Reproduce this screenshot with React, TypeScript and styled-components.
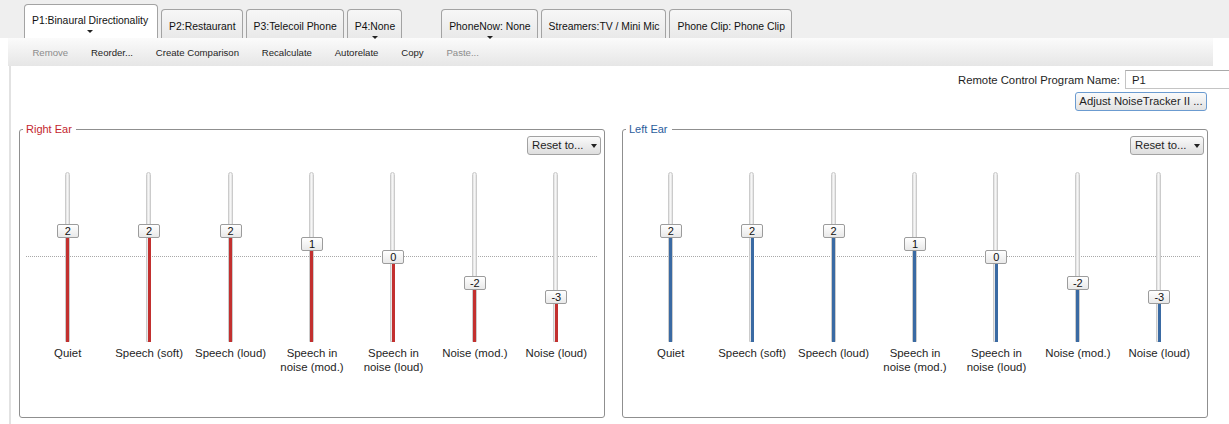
import React from "react";
import styled, { createGlobalStyle } from "styled-components";

const GlobalStyle = createGlobalStyle`
  html, body { margin: 0; padding: 0; background: #ffffff; }
  body { font-family: "Liberation Sans", Arial, sans-serif; color: #1e1e1e; }
`;

const Page = styled.div`
  width: 1229px;
  height: 424px;
  overflow: hidden;
  display: flex;
  flex-direction: column;
  background: #ffffff;
`;

const TabStrip = styled.div`
  height: 38px;
  background: #efefef;
  display: flex;
  align-items: flex-end;
  padding-left: 24px;
  gap: 3px;
`;

const Tab = styled.div<{ $active?: boolean; $gapBefore?: number }>`
  position: relative;
  box-sizing: border-box;
  height: ${(p) => (p.$active ? 34 : 29)}px;
  padding: ${(p) => (p.$active ? "9px 9px 0 7px" : "10px 6px 0 7px")};
  margin-left: ${(p) => p.$gapBefore ?? 0}px;
  border: 1px solid #a3a3a3;
  border-bottom: none;
  border-radius: 4px 4px 0 0;
  background: ${(p) =>
    p.$active ? "#ffffff" : "linear-gradient(#f7f7f7, #e9e9e9)"};
  font-size: 10.4px;
  line-height: 13px;
  color: #111;
  white-space: nowrap;
  display: flex;
  flex-direction: column;
  align-items: center;
`;

const TabArrow = styled.span`
  width: 0;
  height: 0;
  margin-top: 3px;
  border-left: 3px solid transparent;
  border-right: 3px solid transparent;
  border-top: 3px solid #222;
`;

const Toolbar = styled.div`
  height: 28px;
  margin-left: 8px;
  width: 1205px;
  background: linear-gradient(#fbfbfb, #e6e6e6);
  display: flex;
  align-items: center;
  padding-left: 13px;
  box-sizing: border-box;
`;

const ToolItem = styled.span<{ $disabled?: boolean }>`
  padding: 0 11.4px;
  font-size: 9.6px;
  color: ${(p) => (p.$disabled ? "#8c8c8c" : "#1e1e1e")};
  white-space: nowrap;
`;

const Content = styled.div`
  flex: 1;
  margin-left: 9px;
  border-left: 2px solid #e2e2e2;
  display: flex;
  flex-direction: column;
`;

const NameRow = styled.div`
  margin-top: 4px;
  display: flex;
  justify-content: flex-end;
  align-items: center;
  gap: 5px;
  font-size: 11.3px;
`;

const NameInput = styled.div`
  box-sizing: border-box;
  width: 104px;
  height: 19px;
  border: 1px solid #c4c4c4;
  border-right: none;
  border-top-color: #a9a9a9;
  padding: 2px 6px;
  font-size: 11.3px;
  line-height: 14px;
`;

const ButtonRow = styled.div`
  margin-top: 3px;
  display: flex;
  justify-content: flex-end;
  padding-right: 22px;
`;

const AdjustButton = styled.div`
  box-sizing: border-box;
  width: 132px;
  height: 19px;
  border: 1px solid #6b9bd0;
  border-radius: 3px;
  background: linear-gradient(#fafafa, #e2e2e2);
  font-size: 11.3px;
  line-height: 17px;
  text-align: center;
  white-space: nowrap;
`;

const EarsRow = styled.div`
  margin-top: 11px;
  display: flex;
  gap: 17px;
  padding-left: 8px;
`;

const EarSet = styled.fieldset`
  box-sizing: border-box;
  width: 586px;
  height: 296px;
  margin: 0;
  padding: 0 3px 0 0;
  border: 1px solid #8f8f8f;
  border-radius: 3px;
  display: flex;
  flex-direction: column;
`;

const EarLegend = styled.legend<{ $color: string }>`
  margin-left: 3px;
  padding: 0 4px 0 3px;
  font-size: 11px;
  line-height: 14px;
  color: ${(p) => p.$color};
`;

const ResetRow = styled.div`
  display: flex;
  justify-content: flex-end;
`;

const ResetButton = styled.div`
  box-sizing: border-box;
  width: 74px;
  height: 19px;
  border: 1px solid #a2a2a2;
  border-radius: 3px;
  background: linear-gradient(#fafafa, #dedede);
  font-size: 11.3px;
  line-height: 17px;
  padding-left: 4px;
  display: flex;
  align-items: center;
  gap: 7px;
  white-space: nowrap;
`;

const ResetArrow = styled.span`
  width: 0;
  height: 0;
  border-left: 3px solid transparent;
  border-right: 3px solid transparent;
  border-top: 4px solid #222;
`;

const SliderGrid = styled.div`
  position: relative;
  margin-top: 17px;
  padding: 0 4px 0 7px;
  display: grid;
  grid-template-columns: repeat(7, 1fr);

  &::before {
    content: "";
    position: absolute;
    left: 6px;
    right: 4px;
    top: 84px;
    height: 1px;
    background-image: repeating-linear-gradient(
      to right,
      #a8a8a8 0,
      #a8a8a8 1px,
      transparent 1px,
      transparent 2px
    );
  }
`;

const SliderColumn = styled.div`
  display: flex;
  flex-direction: column;
  align-items: center;
`;

const TrackBox = styled.div`
  position: relative;
  width: 22px;
  height: 170px;
`;

const Track = styled.div`
  position: absolute;
  left: 8px;
  top: 0;
  bottom: 0;
  width: 5px;
  border-radius: 3px 3px 0 0;
  box-sizing: border-box;
  border: 1px solid #cbcbcb;
  background: linear-gradient(to right, #e0e0e0, #f6f6f6, #e0e0e0);
`;

const Fill = styled.div<{ $color: string }>`
  position: absolute;
  left: 9.5px;
  bottom: 0;
  width: 3px;
  background: ${(p) => p.$color};
`;

const Handle = styled.div`
  position: absolute;
  left: 0;
  box-sizing: border-box;
  width: 22px;
  height: 14px;
  border: 1px solid #9c9c9c;
  border-radius: 2px;
  background: linear-gradient(#ffffff, #e9e9e9);
  font-size: 11px;
  line-height: 12px;
  text-align: center;
  color: #111;
`;

const SliderLabel = styled.div`
  margin-top: 4px;
  font-size: 11.4px;
  line-height: 14px;
  text-align: center;
  white-space: nowrap;
  color: #1e1e1e;
`;

const CENTER = 85;
const STEP = 13.2;

const bands = [
  { label: ["Quiet"], value: 2 },
  { label: ["Speech (soft)"], value: 2 },
  { label: ["Speech (loud)"], value: 2 },
  { label: ["Speech in", "noise (mod.)"], value: 1 },
  { label: ["Speech in", "noise (loud)"], value: 0 },
  { label: ["Noise (mod.)"], value: -2 },
  { label: ["Noise (loud)"], value: -3 },
];

function Slider({ value, color, label }: { value: number; color: string; label: string[] }) {
  const center = CENTER - value * STEP;
  return (
    <SliderColumn>
      <TrackBox>
        <Track />
        <Fill $color={color} style={{ top: center }} />
        <Handle style={{ top: center - 7 }}>{value}</Handle>
      </TrackBox>
      <SliderLabel>
        {label.map((l, i) => (
          <div key={i}>{l}</div>
        ))}
      </SliderLabel>
    </SliderColumn>
  );
}

function Ear({ title, legendColor, fillColor }: { title: string; legendColor: string; fillColor: string }) {
  return (
    <EarSet>
      <EarLegend $color={legendColor}>{title}</EarLegend>
      <ResetRow>
        <ResetButton>
          Reset to...
          <ResetArrow />
        </ResetButton>
      </ResetRow>
      <SliderGrid>
        {bands.map((b, i) => (
          <Slider key={i} value={b.value} color={fillColor} label={b.label} />
        ))}
      </SliderGrid>
    </EarSet>
  );
}

export default function App() {
  return (
    <>
      <GlobalStyle />
      <Page>
        <TabStrip>
          <Tab $active>
            P1:Binaural Directionality
            <TabArrow />
          </Tab>
          <Tab>P2:Restaurant</Tab>
          <Tab>P3:Telecoil Phone</Tab>
          <Tab>
            P4:None
            <TabArrow />
          </Tab>
          <Tab $gapBefore={36}>
            PhoneNow: None
            <TabArrow />
          </Tab>
          <Tab>Streamers:TV / Mini Mic</Tab>
          <Tab>Phone Clip: Phone Clip</Tab>
        </TabStrip>
        <Toolbar>
          <ToolItem $disabled>Remove</ToolItem>
          <ToolItem>Reorder...</ToolItem>
          <ToolItem>Create Comparison</ToolItem>
          <ToolItem>Recalculate</ToolItem>
          <ToolItem>Autorelate</ToolItem>
          <ToolItem>Copy</ToolItem>
          <ToolItem $disabled>Paste...</ToolItem>
        </Toolbar>
        <Content>
          <NameRow>
            Remote Control Program Name:
            <NameInput>P1</NameInput>
          </NameRow>
          <ButtonRow>
            <AdjustButton>Adjust NoiseTracker II ...</AdjustButton>
          </ButtonRow>
          <EarsRow>
            <Ear title="Right Ear" legendColor="#c4262e" fillColor="#c2302f" />
            <Ear title="Left Ear" legendColor="#2b5d9c" fillColor="#3a6aa3" />
          </EarsRow>
        </Content>
      </Page>
    </>
  );
}
